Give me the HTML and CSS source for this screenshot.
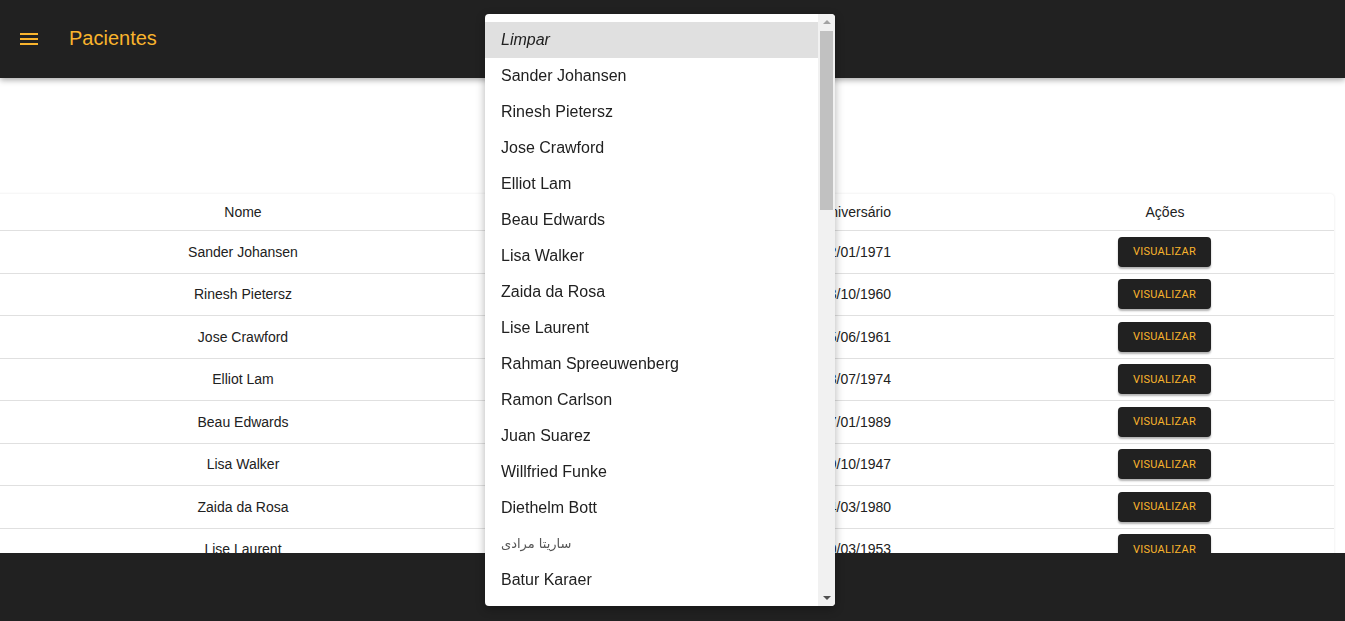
FILE: index.html
```html
<!DOCTYPE html>
<html lang="pt">
<head>
<meta charset="utf-8">
<title>Pacientes</title>
<link rel="stylesheet" href="styles.css">
</head>
<body>
<header class="topbar">
  <svg class="menu-icon" width="18" height="12" viewBox="0 0 18 12" aria-hidden="true">
    <rect x="0" y="0" width="18" height="2" fill="currentColor"/>
    <rect x="0" y="5" width="18" height="2" fill="currentColor"/>
    <rect x="0" y="10" width="18" height="2" fill="currentColor"/>
  </svg>
  <h1 class="title">Pacientes</h1>
</header>

<main class="content">
  <div class="filter-area"></div>
  <div class="card">
    <table class="patients">
      <colgroup>
        <col class="c-name"><col class="c-phone"><col class="c-date"><col class="c-actions">
      </colgroup>
      <thead>
        <tr><th>Nome</th><th></th><th>Aniversário</th><th>Ações</th></tr>
      </thead>
      <tbody>
        <tr><td>Sander Johansen</td><td></td><td>12/01/1971</td><td><button class="btn">Visualizar</button></td></tr>
        <tr><td>Rinesh Pietersz</td><td></td><td>23/10/1960</td><td><button class="btn">Visualizar</button></td></tr>
        <tr><td>Jose Crawford</td><td></td><td>05/06/1961</td><td><button class="btn">Visualizar</button></td></tr>
        <tr><td>Elliot Lam</td><td></td><td>18/07/1974</td><td><button class="btn">Visualizar</button></td></tr>
        <tr><td>Beau Edwards</td><td></td><td>27/01/1989</td><td><button class="btn">Visualizar</button></td></tr>
        <tr><td>Lisa Walker</td><td></td><td>09/10/1947</td><td><button class="btn">Visualizar</button></td></tr>
        <tr><td>Zaida da Rosa</td><td></td><td>14/03/1980</td><td><button class="btn">Visualizar</button></td></tr>
        <tr><td>Lise Laurent</td><td></td><td>30/03/1953</td><td><button class="btn">Visualizar</button></td></tr>
      </tbody>
    </table>
  </div>
</main>

<footer class="bottombar"></footer>

<div class="select-popup" role="listbox">
  <ul class="options">
    <li class="option clear selected">Limpar</li>
    <li class="option">Sander Johansen</li>
    <li class="option">Rinesh Pietersz</li>
    <li class="option">Jose Crawford</li>
    <li class="option">Elliot Lam</li>
    <li class="option">Beau Edwards</li>
    <li class="option">Lisa Walker</li>
    <li class="option">Zaida da Rosa</li>
    <li class="option">Lise Laurent</li>
    <li class="option">Rahman Spreeuwenberg</li>
    <li class="option">Ramon Carlson</li>
    <li class="option">Juan Suarez</li>
    <li class="option">Willfried Funke</li>
    <li class="option">Diethelm Bott</li>
    <li class="option arabic">ساريتا مرادی</li>
    <li class="option">Batur Karaer</li>
  </ul>
  <div class="scrollbar">
    <span class="arrow up"></span>
    <div class="track"><div class="thumb"></div></div>
    <span class="arrow down"></span>
  </div>
</div>
</body>
</html>
```

FILE: styles.css
```css
* { box-sizing: border-box; }

html, body {
  margin: 0;
  padding: 0;
  height: 100%;
  overflow: hidden;
  background: #ffffff;
  font-family: "Liberation Sans", Arial, sans-serif;
  color: #212121;
}

.topbar {
  height: 78px;
  background: #212121;
  display: flex;
  align-items: center;
  padding-left: 20px;
  color: #f9b42d;
  box-shadow: 0 2px 6px rgba(0, 0, 0, 0.35);
  position: relative;
  z-index: 2;
}

.menu-icon { display: block; }

.title {
  margin: 0 0 1px 31px;
  font-size: 20px;
  font-weight: normal;
  color: #f9b42d;
}

.filter-area {
  height: 116px;
}

.card {
  margin: 0 11px 0 -12px;
  background: #fff;
  border-radius: 4px;
  box-shadow: 0 0 3px rgba(0, 0, 0, 0.09);
}

.patients {
  width: 100%;
  border-collapse: separate;
  border-spacing: 0;
  table-layout: fixed;
  font-size: 14px;
}

.c-name { width: 510px; }
.c-phone { width: 218px; }
.c-date { width: 280px; }
.c-actions { width: auto; }

.patients th {
  height: 37px;
  padding: 0 0 1px;
  font-weight: normal;
  text-align: center;
  border-bottom: 1px solid #e0e0e0;
  color: #212121;
}

.patients td {
  height: 42.5px;
  padding: 0;
  text-align: center;
  border-bottom: 1px solid #e0e0e0;
  color: #212121;
}

.btn {
  width: 93px;
  height: 30px;
  margin-left: -1px;
  border: 0;
  border-radius: 4px;
  background: #212121;
  color: #f9b42d;
  font-family: Roboto, "Liberation Sans", sans-serif;
  font-size: 11px;
  font-weight: 400;
  text-transform: uppercase;
  letter-spacing: 0.3px;
  box-shadow: 0 2px 2px rgba(0, 0, 0, 0.3);
  vertical-align: middle;
  cursor: pointer;
}

.bottombar {
  position: fixed;
  left: 0;
  right: 0;
  bottom: 0;
  height: 68px;
  background: #212121;
  z-index: 2;
}

/* native-looking select popup, overlaying the page */
.select-popup {
  position: absolute;
  left: 485px;
  top: 14px;
  width: 350px;
  height: 592px;
  background: #fff;
  border-radius: 4px;
  box-shadow: 0 3px 10px rgba(0, 0, 0, 0.3);
  display: flex;
  overflow: hidden;
  z-index: 5;
}

.options {
  list-style: none;
  margin: 0;
  padding: 8px 0 0;
  flex: 1;
  overflow: hidden;
}

.option {
  height: 36px;
  line-height: 36px;
  padding: 0 16px;
  font-size: 16px;
  color: #212121;
  white-space: nowrap;
}

.option.selected { background: #e0e0e0; }
.option.clear { font-style: italic; }
.option.arabic {
  font-family: "DejaVu Sans", sans-serif;
  font-size: 13px;
  color: #555;
}

.scrollbar {
  width: 17px;
  background: #f1f1f1;
  display: flex;
  flex-direction: column;
  align-items: center;
}

.arrow {
  width: 0;
  height: 0;
  border-left: 4px solid transparent;
  border-right: 4px solid transparent;
  flex: none;
}

.arrow.up {
  margin-top: 6px;
  border-bottom: 4px solid #a3a3a3;
}

.arrow.down {
  margin-bottom: 6px;
  border-top: 4px solid #505050;
}

.track {
  flex: 1;
  width: 100%;
  padding: 7px 2px 0;
}

.thumb {
  height: 179px;
  background: #c1c1c1;
}
```
